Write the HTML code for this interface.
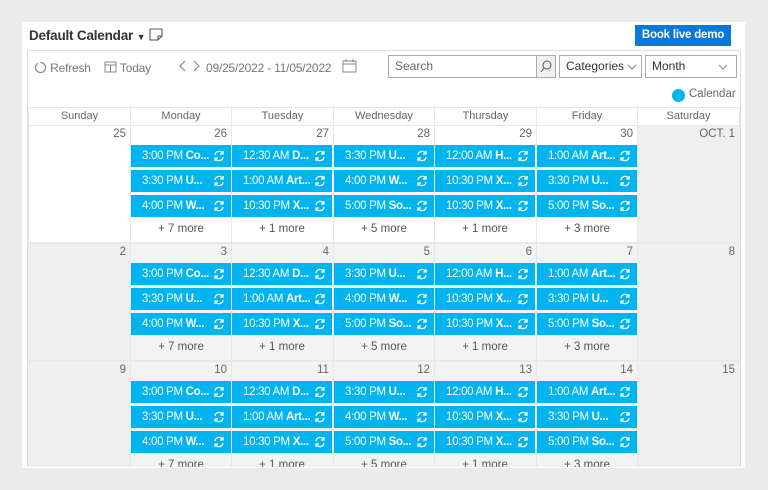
<!DOCTYPE html>
<html><head><meta charset="utf-8"><style>
*{box-sizing:border-box;margin:0;padding:0}
body{width:768px;height:490px;background:#ebebeb;font-family:"Liberation Sans",sans-serif;position:relative;overflow:hidden;color:#333}
.panel{position:absolute;left:22px;top:22px;width:723px;height:446px;background:#fff;overflow:hidden}
.clip{position:absolute;left:0;top:0;width:768px;height:467px;overflow:hidden}
.title{position:absolute;left:29px;top:28px;font-size:13.5px;font-weight:bold;color:#333;letter-spacing:-0.2px}
.btn{position:absolute;left:635px;top:25px;width:96px;height:21px;background:#0a78d4;color:#fff;font-size:11.5px;font-weight:bold;text-align:center;line-height:21px;letter-spacing:-0.2px}
.box{position:absolute;left:27px;top:50px;width:714px;height:440px;border:1px solid #ddd;border-bottom:none}
.tb{position:absolute;top:61px;font-size:12px;color:#777;letter-spacing:-0.2px}
.input{position:absolute;top:55px;height:23px;border:1px solid #aaa;font-size:12px;line-height:21px;padding-left:6px;color:#333;background:#fff}
.hd{position:absolute;top:108px;height:17px;background:#fff;font-size:11px;color:#666;text-align:center;line-height:17px}
.cell{position:absolute;height:116px}
.num{position:absolute;right:4px;top:2px;font-size:11.5px;color:#666}
.ev{position:absolute;left:0;width:100px;height:22px;background:#00b4ef;color:#fff;font-size:11.5px;line-height:22px;padding-left:11px;white-space:nowrap;overflow:hidden;letter-spacing:-0.3px}
.ev b{font-weight:bold}
.ev svg{position:absolute;right:6px;top:5px}
.more{position:absolute;left:0;width:100px;text-align:center;font-size:11.5px;color:#555}
</style></head><body>
<div class="panel"></div>
<div class="clip">
<div class="title">Default Calendar <span style="font-size:9px">&#9660;</span> <svg width="14" height="13" viewBox="0 0 14 13" style="vertical-align:-1px"><path d="M1 1h12v7l-4 4H1z M9 12V8h4" fill="none" stroke="#555" stroke-width="1.1"/></svg></div>
<div class="btn">Book live demo</div>
<div class="box"></div>
<div class="tb" style="left:34px"><svg width="13" height="13" viewBox="0 0 13 13" style="vertical-align:-2px"><path d="M4 2.2A5 5 0 1 0 6.5 1.5" fill="none" stroke="#888" stroke-width="1.2"/></svg> Refresh</div>
<div class="tb" style="left:104px"><svg width="13" height="12" viewBox="0 0 13 12" style="vertical-align:-1px"><rect x="1" y="1" width="11" height="10" fill="none" stroke="#888"/><path d="M1 4h11M6.5 4v7" stroke="#888"/></svg> Today</div>
<svg style="position:absolute;left:178px;top:59px" width="24" height="14" viewBox="0 0 24 14"><path d="M7 2L2 7l5 5M16 2l5 5-5 5" fill="none" stroke="#888" stroke-width="1.2"/></svg>
<div class="tb" style="left:206px">09/25/2022 - 11/05/2022</div>
<svg style="position:absolute;left:342px;top:59px" width="15" height="14" viewBox="0 0 15 14"><rect x="1" y="2" width="13" height="11" fill="none" stroke="#888"/><path d="M1 5h13M4 0v3M11 0v3" stroke="#888"/></svg>
<div class="input" style="left:388px;width:168px;color:#666">Search</div>
<div style="position:absolute;left:536px;top:55px;width:20px;height:23px;border:1px solid #aaa;background:#f0f0f0"><svg width="18" height="21" viewBox="0 0 18 21"><circle cx="10" cy="9" r="4" fill="none" stroke="#555"/><path d="M7 12l-3 4" stroke="#555"/></svg></div>
<div class="input" style="left:559px;width:83px">Categories<svg style="position:absolute;right:4px;top:8px" width="10" height="6" viewBox="0 0 10 6"><path d="M1 1l4 4 4-4" fill="none" stroke="#888"/></svg></div>
<div class="input" style="left:645px;width:92px">Month<svg style="position:absolute;right:8px;top:8px" width="10" height="6" viewBox="0 0 10 6"><path d="M1 1l4 4 4-4" fill="none" stroke="#888"/></svg></div>
<div style="position:absolute;left:672px;top:89px;width:13px;height:13px;border-radius:50%;background:#00b4ef"></div>
<div style="position:absolute;left:689px;top:88px;font-size:11.5px;color:#666">Calendar</div>
<div style="position:absolute;left:28px;top:107px;width:712px;height:380px;background:#e8e8e8"></div>
<div class="hd" style="left:29px;width:101px">Sunday</div>
<div class="hd" style="left:131px;width:100px">Monday</div>
<div class="hd" style="left:232px;width:101px">Tuesday</div>
<div class="hd" style="left:334px;width:100px">Wednesday</div>
<div class="hd" style="left:435px;width:101px">Thursday</div>
<div class="hd" style="left:537px;width:100px">Friday</div>
<div class="hd" style="left:638px;width:101px">Saturday</div>
<div id="g"></div>
</div>
<script>
var xs=[29,131,232,334,435,537,638],ys=[126,244,362];
var nums=[["25","26","27","28","29","30","OCT. 1"],["2","3","4","5","6","7","8"],["9","10","11","12","13","14","15"]];
var ev=[[["3:00 PM ","Co..."],["3:30 PM ","U..."],["4:00 PM ","W..."]],[["12:30 AM ","D..."],["1:00 AM ","Art..."],["10:30 PM ","X..."]],[["3:30 PM ","U..."],["4:00 PM ","W..."],["5:00 PM ","So..."]],[["12:00 AM ","H..."],["10:30 PM ","X..."],["10:30 PM ","X..."]],[["1:00 AM ","Art..."],["3:30 PM ","U..."],["5:00 PM ","So..."]]];
var more=["+ 7 more","+ 1 more","+ 5 more","+ 1 more","+ 3 more"];
var ico='<svg width="12" height="12" viewBox="0 0 12 12"><path d="M2 5A4 4 0 0 1 9.5 3.5M10 7A4 4 0 0 1 2.5 8.5" fill="none" stroke="#fff" stroke-width="1.3"/><path d="M10 1v3H7M2 11V8h3" fill="none" stroke="#fff" stroke-width="1.3"/></svg>';
var h="";
for(var w=0;w<3;w++)for(var d=0;d<7;d++){
var bg=(w==0&&d<6)?"#fff":(d==0||d==6?"#efefef":"#f3f3f3");
var wd=(d==0||d==2||d==4||d==6)?101:100;
h+='<div class="cell" style="left:'+xs[d]+'px;top:'+ys[w]+'px;width:'+wd+'px;background:'+bg+'"><div class="num">'+nums[w][d]+'</div>';
if(d>0&&d<6){var e=ev[d-1];for(var i=0;i<3;i++){h+='<div class="ev" style="top:'+[19,44,69][i]+'px">'+e[i][0]+'<b>'+e[i][1]+'</b>'+ico+'</div>';}
h+='<div class="more" style="top:97px">'+more[d-1]+'</div>';}
h+='</div>';}
document.getElementById("g").innerHTML=h;
</script>
</body></html>
